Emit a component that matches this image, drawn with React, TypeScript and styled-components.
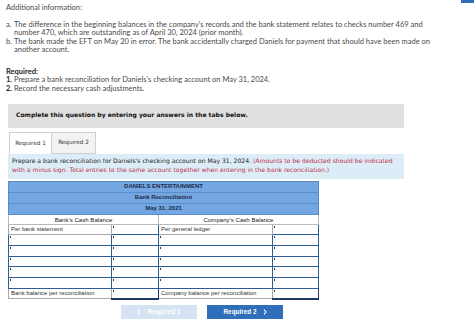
import React from "react";
import styled, { createGlobalStyle } from "styled-components";

const Global = createGlobalStyle`
  html, body { margin: 0; padding: 0; background: #fff; }
  body { width: 474px; height: 333px; overflow: hidden; position: relative; }
`;

const Page = styled.div`
  padding: 4px 0 0 6px;
  font-family: Lato, "Open Sans", sans-serif;
  color: #4a4a4a;
  font-size: 7.5px;
  line-height: 8.5px;
`;

const Corner = styled.div`
  position: absolute;
  top: 0;
  right: 0;
  width: 13px;
  height: 3px;
  background: #2f6fba;
`;

const Para = styled.div<{ $mt?: number }>`
  margin-top: ${(p) => p.$mt ?? 0}px;
`;

const List = styled.ol`
  list-style: none;
  margin: 8px 0 0 0;
  padding: 0;
`;

const Item = styled.li`
  display: flex;
  & > span:first-child { width: 8px; flex: none; }
  & > span:last-child { width: 425px; }
`;

const Strong = styled.b`
  font-weight: 700;
  color: #222;
`;

const QuestionBox = styled.div`
  margin: 10.5px 0 0 2px;
  width: 396px;
  height: 24px;
  background: #e0e0e0;
  display: flex;
  align-items: center;
  padding-left: 8px;
  box-sizing: border-box;
  font-family: "DejaVu Sans", Verdana, sans-serif;
  font-weight: 700;
  font-size: 6.05px;
  color: #111;
`;

const Tabs = styled.div`
  margin: 4px 0 0 3px;
  display: flex;
  height: 22px;
`;

const Tab = styled.div<{ $active?: boolean }>`
  width: ${(p) => (p.$active ? 43 : 44)}px;
  box-sizing: border-box;
  border: 1px solid #cfcfcf;
  border-bottom: ${(p) => (p.$active ? "none" : "1px solid #cfcfcf")};
  border-left: ${(p) => (p.$active ? "1px solid #cfcfcf" : "none")};
  background: ${(p) => (p.$active ? "#fff" : "#f2f2f2")};
  display: flex;
  align-items: center;
  justify-content: center;
  font-family: "DejaVu Sans", Verdana, sans-serif;
  font-size: 5.7px;
  color: #333;
`;

const Instruction = styled.div`
  margin-left: 2px;
  width: 396px;
  height: 25px;
  background: #dcedf8;
  box-sizing: border-box;
  padding: 2px 0 0 4px;
  font-family: "DejaVu Sans", Verdana, sans-serif;
  font-size: 6.1px;
  line-height: 9px;
  color: #222;
`;

const Red = styled.span`
  color: #be2e48;
`;

const Table = styled.table`
  margin: 2px 0 0 2px;
  border-collapse: collapse;
  table-layout: fixed;
  width: 310px;
  font-family: "Liberation Sans", Arial, sans-serif;
  font-size: 6px;
  line-height: 7px;
  color: #333;
`;

const Row = styled.tr<{ $h: number }>`
  height: ${(p) => p.$h}px;
`;

const HeadCell = styled.th`
  background: #74a6e2;
  border: 1px solid #5b8ccc;
  padding: 0;
  font-weight: 700;
  color: #1c2c4a;
  text-align: center;
  font-size: 6px;
`;

const SubHead = styled.td`
  padding: 0;
  text-align: center;
  border: 1px solid #b9b9b9;
  border-top: none;
  color: #222;
  font-size: 6.1px;
`;

const Label = styled.td`
  padding: 0 0 0 2px;
  border: 1px solid #a8a8a8;
  white-space: nowrap;
  overflow: hidden;
`;

const Input = styled.td`
  padding: 0;
  border: 1px solid #2f5c96;
  position: relative;
  &::before {
    content: "";
    position: absolute;
    left: 1px;
    top: 1px;
    width: 1px;
    height: 2px;
    background: #1e3d6b;
  }
`;

const LabelIn = styled(Input)``;

const FinalInput = styled(Input)`
  border: 1px solid #1f3b63;
  border-width: 1px 1px 2px 1px;
`;

const Nav = styled.div`
  margin: 5px 0 0 115px;
  display: flex;
  gap: 10px;
`;

const NavBtn = styled.div<{ $disabled?: boolean }>`
  width: 76px;
  height: 14px;
  display: flex;
  align-items: center;
  justify-content: center;
  gap: 6px;
  background: ${(p) => (p.$disabled ? "#d5e3f2" : "#2f6fba")};
  color: #fff;
  font-family: "Liberation Sans", Arial, sans-serif;
  font-weight: 700;
  font-size: 6.4px;
`;

const Chevron = ({ dir }: { dir: "l" | "r" }) => (
  <svg width="4" height="6" viewBox="0 0 4 6">
    <path
      d={dir === "l" ? "M3 0.7 L1 3 L3 5.3" : "M1 0.7 L3 3 L1 5.3"}
      fill="none"
      stroke="#fff"
      strokeWidth="1.1"
    />
  </svg>
);

const rows = 5;

export default function App() {
  return (
    <>
      <Global />
      <Corner />
      <Page>
        <Para>Additional information:</Para>
        <List>
          <Item>
            <span>a.</span>
            <span>
              The difference in the beginning balances in the company's records and the bank statement relates to checks number 469 and
              number 470, which are outstanding as of April 30, 2024 (prior month).
            </span>
          </Item>
          <Item>
            <span>b.</span>
            <span>
              The bank made the EFT on May 20 in error. The bank accidentally charged Daniels for payment that should have been made on
              another account.
            </span>
          </Item>
        </List>
        <Para $mt={13}>
          <Strong>Required:</Strong>
        </Para>
        <Para>
          <Strong>1.</Strong> Prepare a bank reconciliation for Daniels's checking account on May 31, 2024.
        </Para>
        <Para>
          <Strong>2.</Strong> Record the necessary cash adjustments.
        </Para>
        <QuestionBox>Complete this question by entering your answers in the tabs below.</QuestionBox>
        <Tabs>
          <Tab $active>Required 1</Tab>
          <Tab>Required 2</Tab>
        </Tabs>
        <Instruction>
          Prepare a bank reconciliation for Daniels's checking account on May 31, 2024.{" "}
          <Red>(Amounts to be deducted should be indicated</Red>
          <br />
          <Red>with a minus sign. Total entries to the same account together when entering in the bank reconciliation.)</Red>
        </Instruction>
        <Table>
          <colgroup>
            <col style={{ width: 103 }} />
            <col style={{ width: 47 }} />
            <col style={{ width: 114 }} />
            <col style={{ width: 46 }} />
          </colgroup>
          <thead>
            <Row $h={11}><HeadCell colSpan={4}>DANIELS ENTERTAINMENT</HeadCell></Row>
            <Row $h={11}><HeadCell colSpan={4}>Bank Reconciliation</HeadCell></Row>
            <Row $h={11}><HeadCell colSpan={4}>May 31, 2021</HeadCell></Row>
          </thead>
          <tbody>
            <Row $h={10}>
              <SubHead colSpan={2}>Bank's Cash Balance</SubHead>
              <SubHead colSpan={2}>Company's Cash Balance</SubHead>
            </Row>
            <Row $h={10.7}>
              <Label>Per bank statement</Label>
              <Input />
              <Label>Per general ledger</Label>
              <Input />
            </Row>
            {Array.from({ length: rows }).map((_, i) => (
              <Row $h={10.7} key={i}>
                <LabelIn />
                <Input />
                <LabelIn />
                <Input />
              </Row>
            ))}
            <Row $h={10.7}>
              <Label>Bank balance per reconciliation</Label>
              <FinalInput />
              <Label>Company balance per reconciliation</Label>
              <FinalInput />
            </Row>
          </tbody>
        </Table>
        <Nav>
          <NavBtn $disabled>
            <Chevron dir="l" />
            Required 1
          </NavBtn>
          <NavBtn>
            Required 2
            <Chevron dir="r" />
          </NavBtn>
        </Nav>
      </Page>
    </>
  );
}
